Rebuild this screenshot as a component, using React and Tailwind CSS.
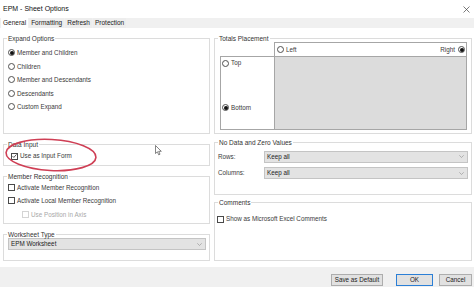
import React from 'react';

const Radio = ({ checked }) => (
    <span className="w-[7px] h-[7px] rounded-full border border-[#505050] bg-white flex items-center justify-center shrink-0">
        {checked && <span className="w-[4px] h-[4px] rounded-full bg-[#111]" />}
    </span>
);

const Check = ({ checked, disabled }) => (
    <span className={"w-[7px] h-[7px] border bg-white flex items-center justify-center shrink-0 " + (disabled ? "border-[#d4d4d4]" : "border-[#4a4a4a]")}>
        {checked && (
            <svg width="6" height="6" viewBox="0 0 6 6" fill="none">
                <path d="M0.6 3.1 L2.2 4.7 L5.4 1.1" stroke="#222" strokeWidth="0.9" />
            </svg>
        )}
    </span>
);

const Group = ({ title, className, children }) => (
    <fieldset className={"border border-[#dcdcdc] px-[3px] min-w-0 " + className}>
        <legend className="px-[1px] text-[6.5px] leading-[7px] text-[#333]">{title}</legend>
        {children}
    </fieldset>
);

const Select = ({ value, className }) => (
    <div className={"h-[12px] flex items-center justify-between bg-[#e3e3e3] border border-[#c4c4c4] pl-[2px] pr-[3px] " + className}>
        <span className="text-[6.3px] text-[#222]">{value}</span>
        <svg width="5" height="3" viewBox="0 0 5 3" fill="none">
            <path d="M0.3 0.3 L2.5 2.5 L4.7 0.3" stroke="#9a9a9a" strokeWidth="0.7" />
        </svg>
    </div>
);

const expandOptions = [
    { label: 'Member and Children', checked: true },
    { label: 'Children' },
    { label: 'Member and Descendants' },
    { label: 'Descendants' },
    { label: 'Custom Expand' },
];

const tabs = ['General', 'Formatting', 'Refresh', 'Protection'];

export default function App() {
    return (
        <div className="relative w-[474px] h-[287px] bg-white overflow-hidden flex flex-col text-[#3a3a3a] font-['Liberation_Sans',Arial,sans-serif]">
            {/* title bar */}
            <div className="h-[18px] flex items-center justify-between pl-[3px] pr-[3px]">
                <span className="text-[7px] text-[#111]">EPM - Sheet Options</span>
                <svg width="7" height="7" viewBox="0 0 7 7" className="mr-[1px]">
                    <path d="M0.5 0.5 L6.5 6.5 M6.5 0.5 L0.5 6.5" stroke="#444" strokeWidth="0.7" />
                </svg>
            </div>

            {/* tabs */}
            <div className="h-[10px] bg-[#f0f0f0] flex items-stretch pl-[1px] text-[6.5px] text-[#222]">
                {tabs.map((t, i) => (
                    <div
                        key={t}
                        className={"flex items-center px-[2px] mr-[1px] " + (i === 0 ? "bg-white" : "bg-[#ededed]")}
                    >
                        {t}
                    </div>
                ))}
            </div>

            {/* content */}
            <div className="h-[239px] flex gap-[4px] pl-[3px] pt-[7px]">
                {/* left column */}
                <div className="w-[207px] flex flex-col">
                    <Group title="Expand Options" className="h-[99px]">
                        <div className="pt-[4px] pl-[1px] flex flex-col">
                            {expandOptions.map((o) => (
                                <div key={o.label} className="h-[13.5px] flex items-center gap-[2px] text-[6.3px]">
                                    <Radio checked={o.checked} />
                                    <span>{o.label}</span>
                                </div>
                            ))}
                        </div>
                    </Group>

                    <Group title="Data Input" className="h-[25px] mt-[7px]">
                        <div className="pt-[3px] pl-[4px]">
                            <div className="h-[10px] flex items-center gap-[2px] text-[6.3px]">
                                <Check checked />
                                <span>Use as Input Form</span>
                            </div>
                        </div>
                    </Group>

                    <Group title="Member Recognition" className="h-[51px] mt-[7px]">
                        <div className="pt-[1px] pl-[1px] flex flex-col text-[6.3px]">
                            <div className="h-[13.3px] flex items-center gap-[2px]">
                                <Check />
                                <span>Activate Member Recognition</span>
                            </div>
                            <div className="h-[13.3px] flex items-center gap-[2px]">
                                <Check />
                                <span>Activate Local Member Recognition</span>
                            </div>
                            <div className="h-[13.3px] flex items-center gap-[2px] pl-[14px] text-[#a8a8a8]">
                                <Check disabled />
                                <span>Use Position in Axis</span>
                            </div>
                        </div>
                    </Group>

                    <Group title="Worksheet Type" className="h-[30px] mt-[7px]">
                        <Select value="EPM Worksheet" className="ml-[1px]" />
                    </Group>
                </div>

                {/* right column */}
                <div className="w-[258px] flex flex-col">
                    <Group title="Totals Placement" className="h-[99px]">
                        <div className="ml-[2px] flex flex-col text-[6.3px]">
                            <div className="ml-[54px] w-[193px] h-[15px] border border-[#a6a6a6] flex items-center justify-between pl-[2px] pr-[1px]">
                                <div className="flex items-center gap-[2px]">
                                    <Radio />
                                    <span>Left</span>
                                </div>
                                <div className="flex items-center gap-[3px]">
                                    <span>Right</span>
                                    <Radio checked />
                                </div>
                            </div>
                            <div className="flex h-[74px] -mt-[1px]">
                                <div className="w-[55px] border border-[#a6a6a6] pl-[1px] pt-[2px] flex flex-col">
                                    <div className="h-[8px] flex items-center gap-[2px]">
                                        <Radio />
                                        <span>Top</span>
                                    </div>
                                    <div className="h-[8px] mt-[36.5px] flex items-center gap-[2px]">
                                        <Radio checked />
                                        <span>Bottom</span>
                                    </div>
                                </div>
                                <div className="w-[193px] -ml-[1px] bg-[#dcdcdc] border border-[#a6a6a6]" />
                            </div>
                        </div>
                    </Group>

                    <Group title="No Data and Zero Values" className="h-[56px] mt-[5px]">
                        <div className="pt-[5px] flex flex-col text-[6.3px]">
                            <div className="h-[11px] flex items-center">
                                <span className="w-[46px]">Rows:</span>
                                <Select value="Keep all" className="flex-1 h-[11px]" />
                            </div>
                            <div className="h-[11px] mt-[5.5px] flex items-center">
                                <span className="w-[46px]">Columns:</span>
                                <Select value="Keep all" className="flex-1 h-[11px]" />
                            </div>
                        </div>
                    </Group>

                    <Group title="Comments" className="h-[62px] mt-[4px]">
                        <div className="pt-[8px] -ml-[1px]">
                            <div className="h-[10px] flex items-center gap-[2px] text-[6.3px]">
                                <Check />
                                <span>Show as Microsoft Excel Comments</span>
                            </div>
                        </div>
                    </Group>
                </div>
            </div>

            {/* button bar */}
            <div className="h-[20px] bg-[#f0f0f0] flex items-start justify-end pt-[7px] pr-[2px] text-[6.3px] text-[#222]">
                <button className="w-[52px] h-[12px] bg-[#e1e1e1] border border-[#adadad] flex items-center justify-center">Save as Default</button>
                <button className="w-[37px] h-[12px] ml-[13px] bg-[#e1e1e1] border border-[#2b7fd6] flex items-center justify-center">OK</button>
                <button className="w-[33px] h-[12px] ml-[6px] bg-[#e1e1e1] border border-[#adadad] flex items-center justify-center">Cancel</button>
            </div>

            {/* annotation ellipse */}
            <svg className="absolute left-[3px] top-[136px]" width="96" height="38" viewBox="0 0 96 38" fill="none">
                <ellipse cx="48" cy="19" rx="45" ry="15.5" transform="rotate(3 48 19)" stroke="#cf3f55" strokeWidth="1.6" />
            </svg>

            {/* mouse pointer */}
            <svg className="absolute left-[155px] top-[145px]" width="7" height="11" viewBox="0 0 7 11" fill="none">
                <path d="M0.5 0.5 L0.5 8.5 L2.4 6.8 L3.7 9.8 L5 9.2 L3.7 6.3 L6.3 6.3 Z" fill="white" stroke="#333" strokeWidth="0.6" />
            </svg>
        </div>
    );
}
